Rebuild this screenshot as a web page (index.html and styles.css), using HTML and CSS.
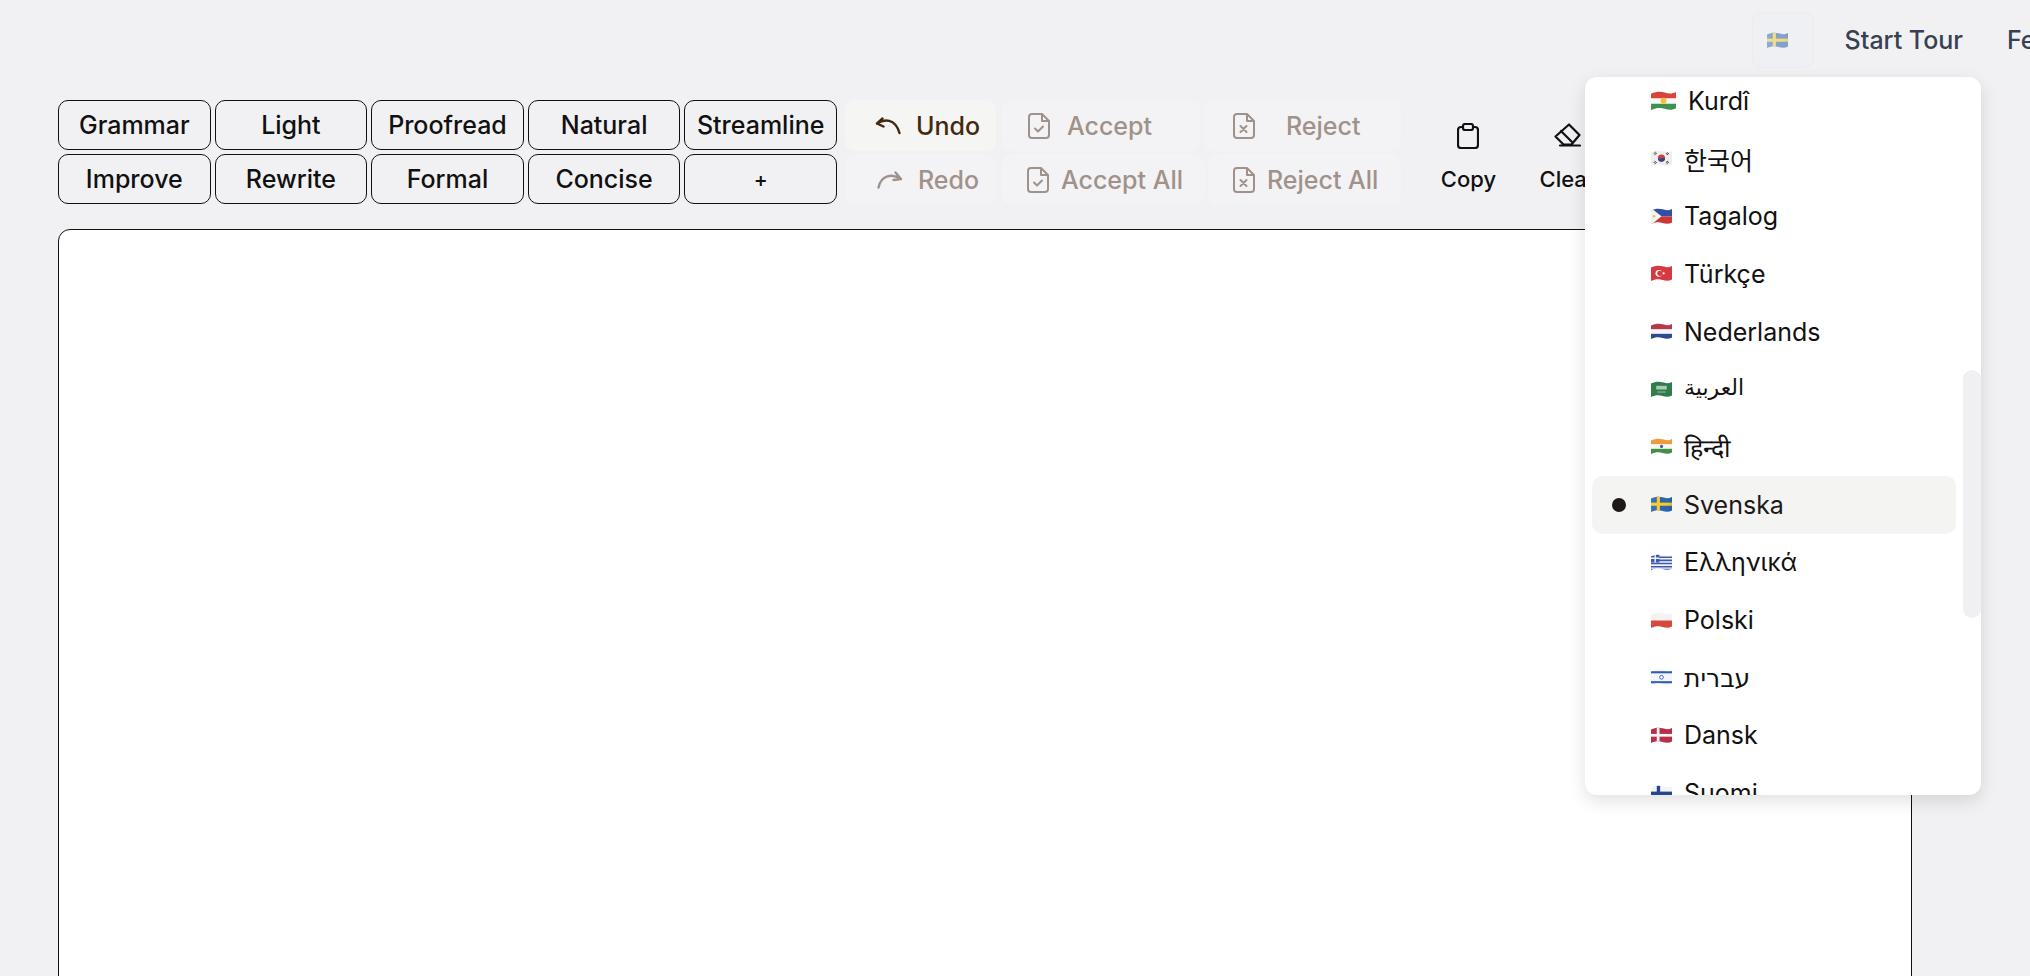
FILE: index.html
```html
<!DOCTYPE html>
<html lang="en">
<head>
    <meta charset="UTF-8">
    <meta name="viewport" content="width=device-width, initial-scale=1.0">
    <title>Text Editor</title>
    <link rel="stylesheet" href="styles.css">
</head>
<body>
    <svg class="flag-defs" aria-hidden="true">
        <defs>
            <clipPath id="wave"><path d="M0 2.200C4 .4 8 .2 11 1.200S17 2.400 20 .8V13.800C17 15.400 14 15.200 11 14.200S4 13.200 0 15.200Z"/></clipPath>
            <linearGradient id="gloss" x1="0" x2="1" y1="0" y2="0">
                <stop offset="0" stop-color="#fff" stop-opacity=".12"/>
                <stop offset=".5" stop-color="#fff" stop-opacity="0"/>
                <stop offset="1" stop-color="#000" stop-opacity=".08"/>
            </linearGradient>
            <symbol id="flag-se" viewBox="0 0 20 16"><g clip-path="url(#wave)"><rect width="20" height="16" fill="#2a64a8"/><rect x="5.500" width="3" height="16" fill="#f5c92f"/><rect y="6.200" width="20" height="3" fill="#f5c92f"/><rect width="20" height="16" fill="url(#gloss)"/></g></symbol>
            <symbol id="flag-ku" viewBox="0 0 20 16"><g clip-path="url(#wave)"><rect width="20" height="6" fill="#d8433a"/><rect y="6" width="20" height="4.200" fill="#f7f7f5"/><rect y="10.200" width="20" height="6" fill="#3f9150"/><circle cx="10" cy="7.800" r="2.400" fill="#f5c03c"/></g></symbol>
            <symbol id="flag-kr" viewBox="0 0 20 16"><g clip-path="url(#wave)"><rect width="20" height="16" fill="#eeeeee"/><circle cx="10" cy="7.600" r="3.400" fill="#d23c44"/><path d="M6.600 7.600a3.400 3.400 0 0 0 6.800.2c-1-1-2.400-.6-3.400 0s-2.600.8-3.400-.2Z" fill="#28478f"/><path d="M2.500 3.500l2-1.600M3.500 4.500l2-1.600M15 2l2 1.600M14.200 3l2 1.600M2.500 11.500l2 1.600M3.500 10.500l2 1.600M15 13l2-1.600M14.200 12l2-1.600" stroke="#333" stroke-width=".9"/></g></symbol>
            <symbol id="flag-ph" viewBox="0 0 20 16"><g clip-path="url(#wave)"><rect width="20" height="8" fill="#2f4fa8"/><rect y="8" width="20" height="8" fill="#cf3535"/><path d="M0 0L10 7.800L0 16Z" fill="#f5f5f5"/><circle cx="3" cy="7.800" r="1.200" fill="#f0c63a"/></g></symbol>
            <symbol id="flag-tr" viewBox="0 0 20 16"><g clip-path="url(#wave)"><rect width="20" height="16" fill="#d8383f"/><circle cx="7.500" cy="7.800" r="3.200" fill="#fff"/><circle cx="8.500" cy="7.800" r="2.500" fill="#d8383f"/><circle cx="12" cy="7.800" r="1.100" fill="#fff"/></g></symbol>
            <symbol id="flag-nl" viewBox="0 0 20 16"><g clip-path="url(#wave)"><rect width="20" height="6" fill="#b5394a"/><rect y="6" width="20" height="4.200" fill="#f6f6f6"/><rect y="10.200" width="20" height="6" fill="#2c4a8c"/></g></symbol>
            <symbol id="flag-sa" viewBox="0 0 20 16"><g clip-path="url(#wave)"><rect width="20" height="16" fill="#2f7d4a"/><rect x="5" y="4.500" width="10" height="3.500" fill="#a9cdb4"/><rect x="6" y="10" width="8" height=".8" fill="#a9cdb4"/></g></symbol>
            <symbol id="flag-in" viewBox="0 0 20 16"><g clip-path="url(#wave)"><rect width="20" height="6" fill="#f09a3e"/><rect y="6" width="20" height="4.200" fill="#f6f6f6"/><rect y="10.200" width="20" height="6" fill="#3f9144"/><circle cx="10" cy="7.900" r="1.500" fill="#4a5a9c"/></g></symbol>
            <symbol id="flag-gr" viewBox="0 0 20 16"><g clip-path="url(#wave)"><rect width="20" height="16" fill="#f4f4f8"/><path d="M0 3h20M0 6h20M0 9h20M0 12h20M0 14.800h20" stroke="#3d58ae" stroke-width="1.500"/><rect width="8" height="8" fill="#3d58ae"/><path d="M4 0v8M0 4h8" stroke="#f4f4f8" stroke-width="1.400"/></g></symbol>
            <symbol id="flag-pl" viewBox="0 0 20 16"><g clip-path="url(#wave)"><rect width="20" height="8" fill="#f3f3f3"/><rect y="8" width="20" height="8" fill="#d9483f"/></g></symbol>
            <symbol id="flag-il" viewBox="0 0 20 16"><g clip-path="url(#wave)"><rect width="20" height="16" fill="#f4f5f8"/><rect y="2" width="20" height="2" fill="#2f5bb5"/><rect y="11.500" width="20" height="2" fill="#2f5bb5"/><circle cx="10" cy="7.800" r="1.800" fill="none" stroke="#2f5bb5" stroke-width=".8"/></g></symbol>
            <symbol id="flag-dk" viewBox="0 0 20 16"><g clip-path="url(#wave)"><rect width="20" height="16" fill="#b92f48"/><rect x="5.500" width="2.600" height="16" fill="#f5f5f5"/><rect y="6.500" width="20" height="2.600" fill="#f5f5f5"/></g></symbol>
            <symbol id="flag-fi" viewBox="0 0 20 16"><g clip-path="url(#wave)"><rect width="20" height="16" fill="#f5f5f7"/><rect x="5.500" width="3.200" height="16" fill="#24478c"/><rect y="6.200" width="20" height="3.200" fill="#24478c"/></g></symbol>
        </defs>
    </svg>

    <header class="top-nav">
        <button class="lang-button"><svg class="flag flag-faded"><use href="#flag-se"/></svg></button>
        <a class="nav-link">Start Tour</a>
        <a class="nav-link nav-link-last">Feedback</a>
    </header>

    <section class="toolbar">
        <div class="prompt-grid">
            <button class="prompt">Grammar</button>
            <button class="prompt">Light</button>
            <button class="prompt">Proofread</button>
            <button class="prompt">Natural</button>
            <button class="prompt">Streamline</button>
            <button class="prompt">Improve</button>
            <button class="prompt">Rewrite</button>
            <button class="prompt">Formal</button>
            <button class="prompt">Concise</button>
            <button class="prompt prompt-add">+</button>
        </div>

        <div class="history">
            <div class="history-row">
                <button class="tile tile-undo active">
                    <svg class="icon-arrow" viewBox="0 0 26 18"><path d="M2 6.500C9 2 20 1 24.500 16M7.500 1.500L2 6.500l6.500 3"/></svg>
                    Undo
                </button>
                <button class="tile tile-accept">
                    <svg class="icon-file" viewBox="0 0 22 26"><path d="M4 1h10l7 7v14a3 3 0 0 1-3 3H4a3 3 0 0 1-3-3V4a3 3 0 0 1 3-3ZM14 1v7h7"/><path d="M7 15.500l3 3 5-5"/></svg>
                    Accept
                </button>
                <button class="tile tile-reject">
                    <svg class="icon-file" viewBox="0 0 22 26"><path d="M4 1h10l7 7v14a3 3 0 0 1-3 3H4a3 3 0 0 1-3-3V4a3 3 0 0 1 3-3ZM14 1v7h7"/><path d="M7.500 13l6 6M13.500 13l-6 6"/></svg>
                    Reject
                </button>
            </div>
            <div class="history-row">
                <button class="tile tile-redo">
                    <svg class="icon-arrow" viewBox="0 0 26 18"><path d="M1.500 16.500C4 4 15 2 24 8M18.500 1.500l5.500 6.500-7.500 1"/></svg>
                    Redo
                </button>
                <button class="tile tile-accept-all">
                    <svg class="icon-file" viewBox="0 0 22 26"><path d="M4 1h10l7 7v14a3 3 0 0 1-3 3H4a3 3 0 0 1-3-3V4a3 3 0 0 1 3-3ZM14 1v7h7"/><path d="M7 15.500l3 3 5-5"/></svg>
                    Accept All
                </button>
                <button class="tile tile-reject-all">
                    <svg class="icon-file" viewBox="0 0 22 26"><path d="M4 1h10l7 7v14a3 3 0 0 1-3 3H4a3 3 0 0 1-3-3V4a3 3 0 0 1 3-3ZM14 1v7h7"/><path d="M7.500 13l6 6M13.500 13l-6 6"/></svg>
                    Reject All
                </button>
            </div>
        </div>

        <button class="action">
            <svg class="icon-copy" viewBox="0 0 22 26"><path d="M6 4H4a3 3 0 0 0-3 3v15a3 3 0 0 0 3 3h14a3 3 0 0 0 3-3V7a3 3 0 0 0-3-3h-2"/><rect x="6" y="1" width="10" height="6" rx="2"/></svg>
            Copy
        </button>
        <button class="action">
            <svg class="icon-eraser" viewBox="0 0 27 24"><path d="M15 1.500L25.500 12l-8 9.500H9.500L1.500 13.500ZM7 8l11 11M6 22.500h20"/></svg>
            Clear
        </button>
    </section>

    <textarea class="editor"></textarea>

    <div class="lang-menu">
        <ul class="lang-list">
            <li class="lang-item"><span class="lang-dot"></span><svg class="flag flag-large"><use href="#flag-ku"/></svg>Kurdî</li>
            <li class="lang-item"><span class="lang-dot"></span><svg class="flag"><use href="#flag-kr"/></svg>한국어</li>
            <li class="lang-item"><span class="lang-dot"></span><svg class="flag"><use href="#flag-ph"/></svg>Tagalog</li>
            <li class="lang-item"><span class="lang-dot"></span><svg class="flag"><use href="#flag-tr"/></svg>Türkçe</li>
            <li class="lang-item"><span class="lang-dot"></span><svg class="flag"><use href="#flag-nl"/></svg>Nederlands</li>
            <li class="lang-item"><span class="lang-dot"></span><svg class="flag"><use href="#flag-sa"/></svg><span class="lang-arabic" dir="rtl">العربية</span></li>
            <li class="lang-item"><span class="lang-dot"></span><svg class="flag"><use href="#flag-in"/></svg>हिन्दी</li>
            <li class="lang-item selected"><span class="lang-dot"></span><svg class="flag"><use href="#flag-se"/></svg>Svenska</li>
            <li class="lang-item"><span class="lang-dot"></span><svg class="flag"><use href="#flag-gr"/></svg>Ελληνικά</li>
            <li class="lang-item"><span class="lang-dot"></span><svg class="flag"><use href="#flag-pl"/></svg>Polski</li>
            <li class="lang-item"><span class="lang-dot"></span><svg class="flag"><use href="#flag-il"/></svg><span dir="rtl">עברית</span></li>
            <li class="lang-item"><span class="lang-dot"></span><svg class="flag"><use href="#flag-dk"/></svg>Dansk</li>
            <li class="lang-item"><span class="lang-dot"></span><svg class="flag"><use href="#flag-fi"/></svg>Suomi</li>
        </ul>
        <div class="lang-scrollbar"></div>
    </div>
</body>
</html>
```
FILE: styles.css
```css
body {
    font-family: Inter, "Noto Sans CJK KR", "DejaVu Sans", sans-serif;
    background-color: #f1f1f4;
    margin: 0;
    height: 100vh;
    overflow: hidden;
    position: relative;
}
button {
    font-family: inherit;
    cursor: pointer;
}
.flag-defs {
    position: absolute;
    width: 0;
    height: 0;
}
.top-nav {
    display: flex;
    justify-content: flex-end;
    align-items: center;
    height: 56px;
    padding-top: 12px;
    padding-bottom: 32px;
    margin-right: -94px;
}
.lang-button {
    width: 62px;
    height: 56px;
    padding: 0 0 0 14px;
    display: flex;
    align-items: center;
    background: #eff0f4;
    border: 1px solid #ebecf0;
    border-radius: 10px;
    margin-right: 31px;
}
.nav-link {
    font-size: 25px;
    font-weight: 500;
    color: #374151;
}
.nav-link-last {
    margin-left: 44px;
}
.toolbar {
    display: flex;
    align-items: flex-start;
    margin-left: 58px;
}
.prompt-grid {
    display: grid;
    grid-template-columns: repeat(5, 152.6px);
    grid-auto-rows: 50px;
    column-gap: 4px;
    row-gap: 4px;
}
.prompt {
    background: transparent;
    border: 1px solid #111;
    border-radius: 10px;
    font-size: 25px;
    font-weight: 500;
    color: #111;
    padding: 0;
}
.prompt-add {
    font-size: 21px;
}
.history {
    display: flex;
    flex-direction: column;
    gap: 3px;
    margin-left: 8px;
}
.history-row {
    display: flex;
    height: 51px;
}
.tile {
    display: flex;
    align-items: center;
    justify-content: flex-start;
    height: 100%;
    border: none;
    border-radius: 10px;
    background: #f3f3f5;
    color: #a0928a;
    font-size: 25px;
    font-weight: 500;
    white-space: nowrap;
}
.tile.active {
    background: #f5f5f3;
    color: #43290f;
}
.tile-undo {
    width: 151px;
    padding: 0 0 0 30px;
    gap: 15px;
}
.tile-redo {
    width: 151px;
    padding: 0 0 0 32px;
    gap: 15px;
}
.tile-accept {
    width: 198px;
    margin-left: 6px;
    padding: 0 0 0 26px;
    gap: 17px;
}
.tile-reject {
    width: 197px;
    margin-left: 4px;
    padding: 0 0 0 29px;
    gap: 31px;
}
.tile-accept-all {
    width: 203px;
    margin-left: 6px;
    padding: 0 0 0 25px;
    gap: 12px;
}
.tile-reject-all {
    width: 193px;
    margin-left: 3px;
    padding: 0 0 0 25px;
    gap: 12px;
}
.icon-arrow {
    width: 26px;
    height: 18px;
    flex: none;
    fill: none;
    stroke: currentColor;
    stroke-width: 2.4;
    stroke-linecap: round;
    stroke-linejoin: round;
}
.icon-file {
    width: 22px;
    height: 26px;
    flex: none;
    fill: none;
    stroke: currentColor;
    stroke-width: 2;
    stroke-linejoin: round;
    stroke-linecap: round;
}
.action {
    width: 99px;
    height: 103px;
    padding: 23px 0 0;
    display: flex;
    flex-direction: column;
    align-items: center;
    background: transparent;
    border: none;
    font-size: 22px;
    font-weight: 500;
    color: #111;
    gap: 17px;
}
.history + .action {
    margin-left: 18px;
}
.icon-copy {
    width: 22px;
    height: 26px;
    fill: none;
    stroke: #111;
    stroke-width: 2.2;
    stroke-linejoin: round;
}
.icon-eraser {
    width: 27px;
    height: 24px;
    margin-bottom: 2px;
    fill: none;
    stroke: #111;
    stroke-width: 2.2;
    stroke-linejoin: round;
    stroke-linecap: round;
}
.editor {
    display: block;
    box-sizing: border-box;
    width: 1854px;
    height: 900px;
    margin: 24px 0 0 58px;
    border: 1px solid #111;
    border-radius: 12px;
    background: #fff;
    resize: none;
    outline: none;
}
.lang-menu {
    position: absolute;
    left: 1585px;
    top: 77px;
    width: 396px;
    height: 718px;
    background: #fff;
    border-radius: 12px;
    overflow: hidden;
    box-shadow: 0 6px 18px rgba(0, 0, 0, 0.12);
}
.lang-list {
    list-style: none;
    margin: -5px 0 0;
    padding: 0 25px 0 7px;
}
.lang-item {
    display: flex;
    align-items: center;
    height: 57.7px;
    padding-left: 20px;
    border-radius: 10px;
    font-size: 25px;
    color: #111;
}
.lang-dot {
    width: 14px;
    height: 14px;
    flex: none;
    margin-right: 25px;
    border-radius: 50%;
}
.lang-item.selected {
    background: #f4f4f3;
    color: #1c1917;
}
.lang-item.selected .lang-dot {
    background: #1c1917;
}
.lang-arabic {
    font-size: 22px;
    margin-top: -4px;
}
.flag {
    width: 21px;
    height: 17px;
    flex: none;
    margin-right: 12px;
}
.flag-large {
    width: 25px;
    height: 20px;
    margin-right: 12px;
}
.flag-faded {
    margin: 0;
    opacity: 0.55;
}
.lang-scrollbar {
    position: absolute;
    right: 0;
    top: 293px;
    width: 18px;
    height: 248px;
    border-radius: 9px;
    background: #f0f0f3;
}
```
